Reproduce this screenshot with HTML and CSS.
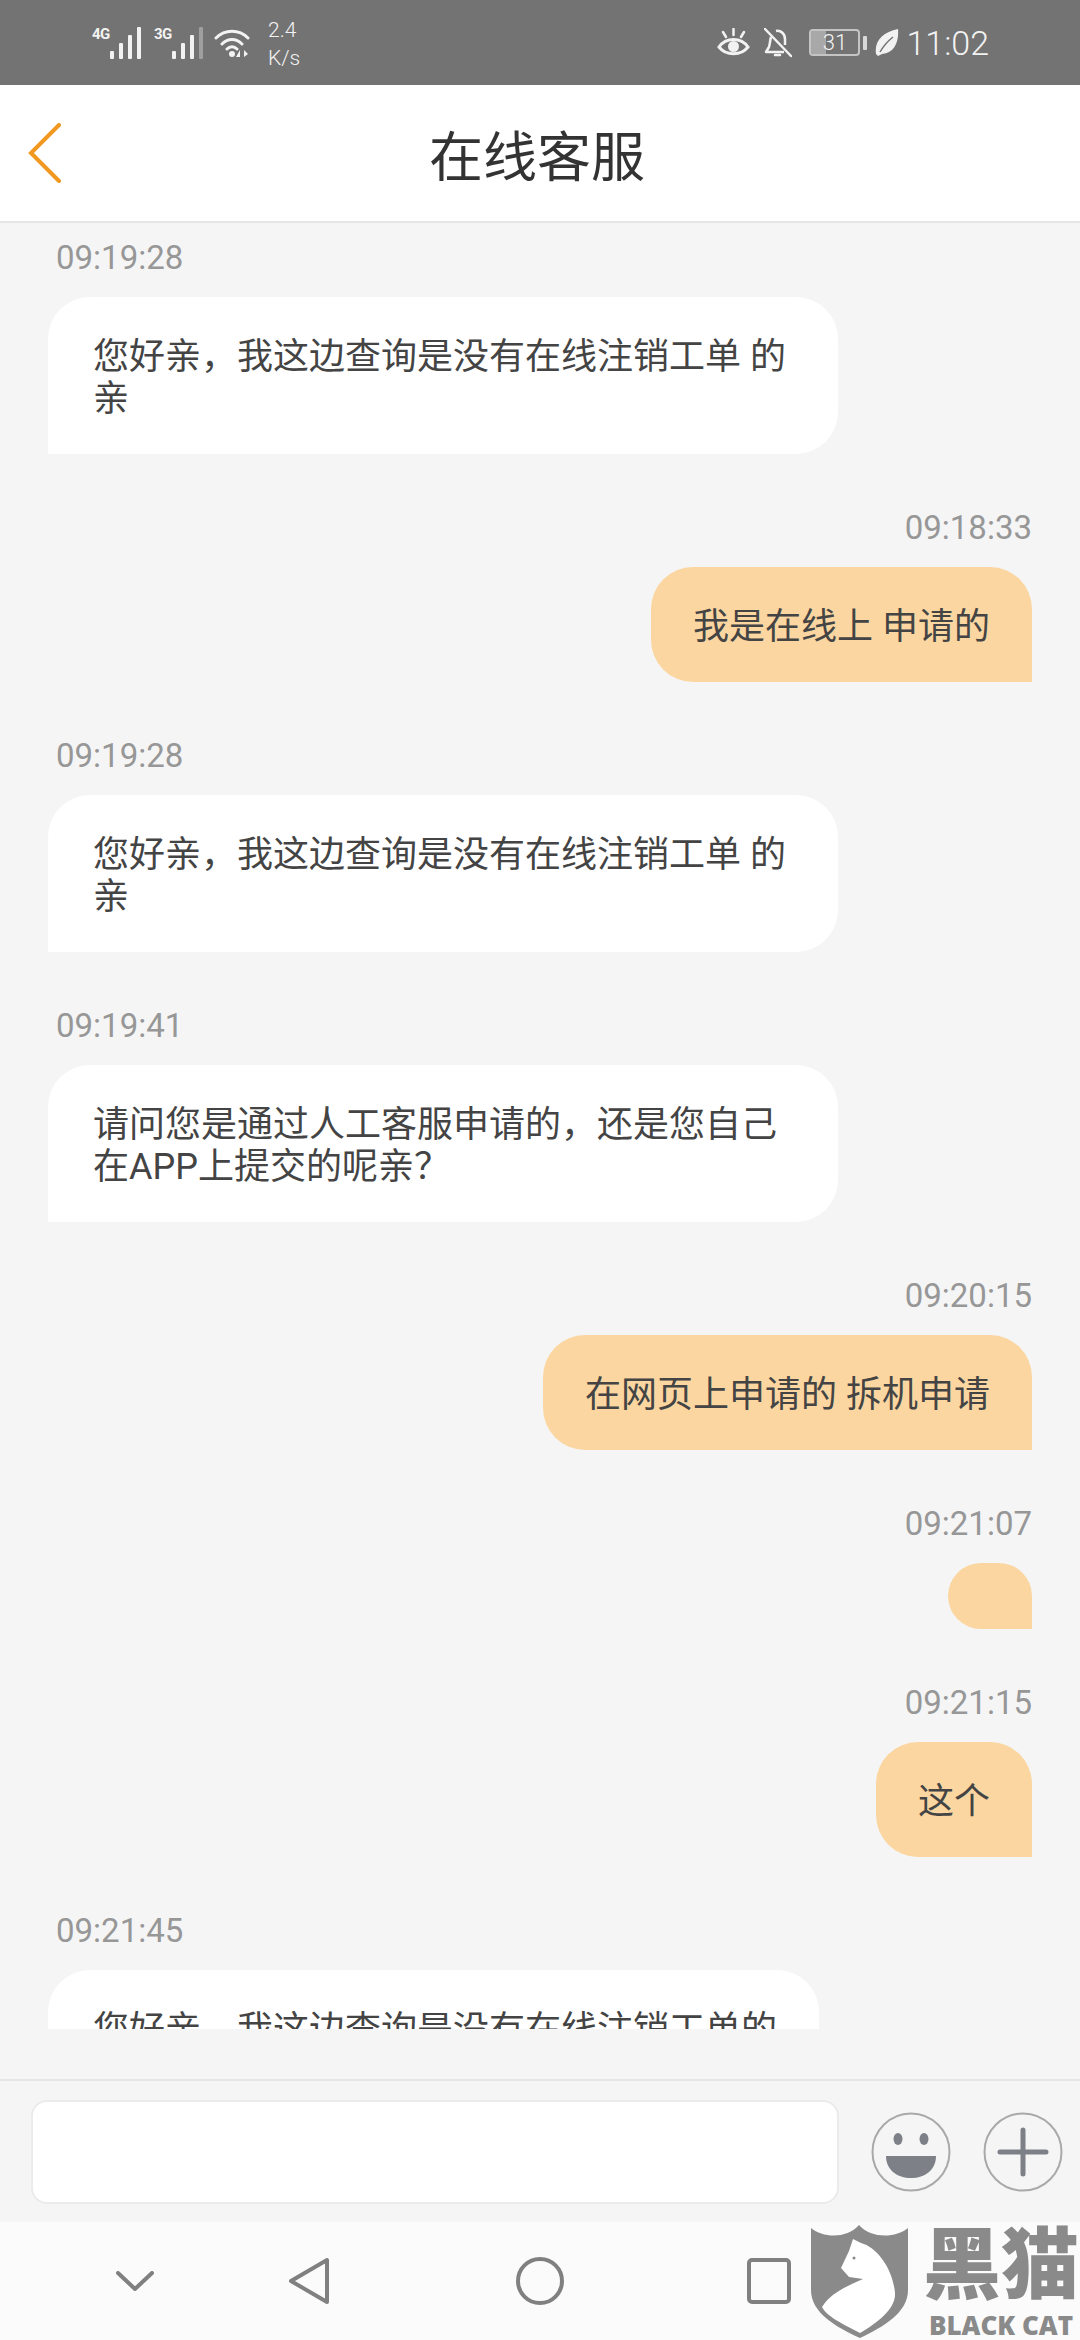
FILE: index.html
```html
<!DOCTYPE html>
<html lang="zh-CN">
<head>
    <meta charset="UTF-8">
    <meta name="viewport" content="width=device-width, initial-scale=1.0">
    <title>在线客服</title>
    <link rel="stylesheet" href="styles.css">
</head>
<body>
    <div class="status-bar">
        <div class="status-left">
            <span class="net-label">4G</span>
            <svg class="signal" viewBox="0 0 32 32"><rect x="0" y="24" width="4" height="8" rx="1"/><rect x="9" y="16" width="4" height="16" rx="1"/><rect x="18" y="8" width="4" height="24" rx="1"/><rect x="27" y="0" width="4" height="32" rx="1"/></svg>
            <span class="net-label net-label-second">3G</span>
            <svg class="signal" viewBox="0 0 32 32"><rect x="0" y="24" width="4" height="8" rx="1"/><rect x="9" y="16" width="4" height="16" rx="1"/><rect x="18" y="8" width="4" height="24" rx="1"/><rect x="27" y="0" width="4" height="32" rx="1" opacity="0.35"/></svg>
            <svg class="wifi" viewBox="0 0 36 30">
                <path d="M2 10 C11 1 25 1 34 10 M8 16 C14 10 22 10 28 16 M13 21 C16 18 20 18 23 21" fill="none" stroke="#f2f2f2" stroke-width="3" stroke-linecap="round"/>
                <circle cx="18" cy="26" r="3" fill="#f2f2f2"/>
                <path d="M26 29 V22 L22 29 Z M30 22 V29 L34 26 Z" fill="#f2f2f2"/>
            </svg>
            <div class="speed">2.4<br>K/s</div>
        </div>
        <div class="status-right">
            <svg class="eye" viewBox="0 0 33 30">
                <path d="M2 19 C9 9 24 9 31 19 C24 28 9 28 2 19 Z" fill="none" stroke="#f2f2f2" stroke-width="3"/>
                <circle cx="16.500" cy="18.500" r="5.500" fill="#f2f2f2"/>
                <path d="M16.500 1 V7 M6 4 L9 9 M27 4 L24 9" stroke="#f2f2f2" stroke-width="2.500" stroke-linecap="round"/>
            </svg>
            <svg class="bell" viewBox="0 0 28 30">
                <path d="M7 9 C6 12 6 16 5 19 L2 24 H20 M12 3 C17 2 21 6 21 11 V17" fill="none" stroke="#f2f2f2" stroke-width="2.500" stroke-linejoin="round"/>
                <path d="M1 1 L27 28" stroke="#f2f2f2" stroke-width="2.500" stroke-linecap="round"/>
                <path d="M11 27 H16" stroke="#f2f2f2" stroke-width="2.500" stroke-linecap="round"/>
            </svg>
            <div class="battery"><div class="battery-level"></div><span class="battery-num">31</span></div>
            <div class="battery-cap"></div>
            <svg class="leaf" viewBox="0 0 24 27">
                <path d="M23 0 C24 12 20 24 7 25 L3 27 L1 25 C-1 12 8 3 23 0 Z" fill="#f2f2f2"/>
                <path d="M5 23 C9 16 13 12 18 8" fill="none" stroke="#737373" stroke-width="1.500"/>
            </svg>
            <span class="clock">11:02</span>
        </div>
    </div>

    <header class="top-bar">
        <svg class="back" viewBox="0 0 34 60"><path d="M31 2 L3 30 L31 58" fill="none" stroke="#f0981f" stroke-width="4" stroke-linecap="round"/></svg>
        <h1 class="title">在线客服</h1>
        <div></div>
    </header>

    <main class="chat">
        <div class="msg">
            <div class="time">09:19:28</div>
            <div class="bubble">您好亲，我这边查询是没有在线注销工单 的亲</div>
        </div>
        <div class="msg mine">
            <div class="time">09:18:33</div>
            <div class="bubble">我是在线上 申请的</div>
        </div>
        <div class="msg">
            <div class="time">09:19:28</div>
            <div class="bubble">您好亲，我这边查询是没有在线注销工单 的亲</div>
        </div>
        <div class="msg">
            <div class="time">09:19:41</div>
            <div class="bubble">请问您是通过人工客服申请的，还是您自己在APP上提交的呢亲？</div>
        </div>
        <div class="msg mine">
            <div class="time">09:20:15</div>
            <div class="bubble">在网页上申请的 拆机申请</div>
        </div>
        <div class="msg mine">
            <div class="time">09:21:07</div>
            <div class="bubble bubble-empty"></div>
        </div>
        <div class="msg mine">
            <div class="time">09:21:15</div>
            <div class="bubble">这个</div>
        </div>
        <div class="msg">
            <div class="time">09:21:45</div>
            <div class="bubble">您好亲，我这边查询是没有在线注销工单的</div>
        </div>
    </main>

    <div class="composer">
        <div class="input-box"></div>
        <svg class="round-btn" viewBox="0 0 80 80">
            <circle cx="40" cy="40" r="38.500" fill="none" stroke="#a9a9a9" stroke-width="2"/>
            <ellipse cx="27" cy="27" rx="4.500" ry="6" fill="#7d8087"/>
            <ellipse cx="53" cy="27" rx="4.500" ry="6" fill="#7d8087"/>
            <path d="M15 44 H65 C65 58 54 66 40 66 C26 66 15 58 15 44 Z" fill="#7d8087"/>
        </svg>
        <svg class="round-btn" viewBox="0 0 80 80">
            <circle cx="40" cy="40" r="38.500" fill="none" stroke="#a9a9a9" stroke-width="2"/>
            <path d="M40 18 V62 M17 40 H63" stroke="#7d8087" stroke-width="5" stroke-linecap="round"/>
        </svg>
    </div>

    <nav class="nav-bar">
        <svg class="nav-chevron" viewBox="0 0 38 20"><path d="M2 2 L19 18 L36 2" fill="none" stroke="#808080" stroke-width="4" stroke-linecap="round" stroke-linejoin="round"/></svg>
        <svg class="nav-back" viewBox="0 0 42 48"><path d="M39 3 V45 L3 24 Z" fill="none" stroke="#808080" stroke-width="4" stroke-linejoin="round"/></svg>
        <svg class="nav-home" viewBox="0 0 48 48"><circle cx="24" cy="24" r="22" fill="none" stroke="#808080" stroke-width="4"/></svg>
        <svg class="nav-recent" viewBox="0 0 44 46"><rect x="2" y="2" width="40" height="42" rx="3" fill="none" stroke="#808080" stroke-width="4"/></svg>
    </nav>

    <div class="watermark">
        <svg class="wm-shield" viewBox="0 0 97 113">
            <path d="M0 3 C12 13 36 14 48 0 C60 14 85 13 97 3 V65 C97 88 72 102 49 113 C25 102 0 88 0 65 Z" fill="#8a8a8a"/>
            <path d="M42 14 L50 18 C66 22 82 44 84 68 C85 84 66 98 49 108 C34 100 16 92 11 82 C20 68 34 62 52 54 L38 52 L30 43 L38 26 Z" fill="#fff"/>
            <circle cx="43" cy="33" r="1.500" fill="#8a8a8a"/>
        </svg>
        <div class="wm-text">
            <div class="wm-cn">黑猫</div>
            <div class="wm-en">BLACK CAT</div>
        </div>
    </div>
</body>
</html>
```

FILE: styles.css
```css
:root {
    --bg-color: #f5f5f5;
    --bar-grey: #737373;
    --line: #e6e6e6;
    --time: #979797;
    --text: #444;
    --mine: #fbd6a0;
}

* {
    box-sizing: border-box;
}

html, body {
    margin: 0;
    height: 2340px;
    overflow: hidden;
}

body {
    position: relative;
    display: flex;
    flex-direction: column;
    font-family: Roboto, "Noto Sans CJK SC", sans-serif;
    background-color: var(--bg-color);
    color: var(--text);
}

/* status bar */
.status-bar {
    flex: none;
    height: 85px;
    padding: 0 91px 0 92px;
    display: flex;
    align-items: center;
    justify-content: space-between;
    background-color: var(--bar-grey);
    color: #f2f2f2;
}

.status-left, .status-right {
    display: flex;
    align-items: center;
}

.net-label {
    width: 18px;
    margin-top: -18px;
    font-size: 15px;
    font-weight: 700;
    letter-spacing: -0.5px;
    line-height: 16px;
    white-space: nowrap;
}

.net-label-second {
    margin-left: 12px;
}

.signal {
    width: 32px;
    height: 32px;
    margin-top: 1px;
    fill: #f2f2f2;
}

.wifi {
    width: 36px;
    height: 30px;
    margin-left: 10px;
}

.speed {
    margin-top: 2px;
    margin-left: 18px;
    font-size: 21px;
    line-height: 28px;
    font-weight: 300;
}

.eye {
    width: 35px;
    height: 30px;
}

.bell {
    width: 28px;
    height: 30px;
    margin-left: 13px;
}

.battery {
    position: relative;
    width: 51px;
    height: 27px;
    margin-left: 17px;
    border: 2px solid #c4c4c4;
    border-radius: 4px;
}

.battery-level {
    width: 31%;
    height: 100%;
    background-color: #a8a8a8;
}

.battery-num {
    position: absolute;
    inset: 0;
    text-align: center;
    font-size: 22px;
    line-height: 23px;
    font-weight: 300;
}

.battery-cap {
    width: 4px;
    height: 14px;
    margin-left: 3px;
    background-color: #d8d8d8;
    border-radius: 1px;
}

.leaf {
    width: 24px;
    height: 27px;
    margin-left: 8px;
}

.clock {
    margin-left: 7px;
    font-size: 34px;
    font-weight: 300;
}

/* header */
.top-bar {
    flex: none;
    height: 138px;
    display: grid;
    grid-template-columns: 1fr auto 1fr;
    align-items: center;
    background-color: #fff;
    border-bottom: 2px solid var(--line);
}

.back {
    width: 34px;
    height: 60px;
    margin-left: 28px;
}

.title {
    margin: 12px 0 0 -6px;
    font-size: 54px;
    font-weight: 400;
    line-height: 70px;
    color: #333;
}

/* messages */
.chat {
    flex: none;
    height: 1806px;
    padding: 16px 48px 0;
    overflow: hidden;
}

.msg {
    display: flex;
    flex-direction: column;
    align-items: flex-start;
    margin-bottom: 55px;
}

.time {
    margin-bottom: 20px;
    padding: 0 8px;
    font-size: 33px;
    line-height: 38px;
    color: var(--time);
}

.bubble {
    max-width: 790px;
    padding: 39px 42px 34px 45px;
    font-size: 36px;
    line-height: 42px;
    background-color: #fff;
    border-radius: 42px 42px 42px 0;
}

.mine {
    align-items: flex-end;
}

.mine .time {
    padding: 0;
}

.mine .bubble {
    padding-left: 42px;
    background-color: var(--mine);
    border-radius: 42px 42px 0 42px;
}

.mine .bubble-empty {
    width: 84px;
    height: 66px;
    padding: 0;
}

/* input row */
.composer {
    flex: none;
    height: 143px;
    display: flex;
    align-items: center;
    gap: 32px;
    margin-top: 50px;
    padding-left: 31px;
    border-top: 2px solid var(--line);
}

.input-box {
    flex: none;
    width: 808px;
    height: 104px;
    background-color: #fff;
    border: 2px solid #ebebeb;
    border-radius: 16px;
}

.round-btn {
    flex: none;
    width: 80px;
    height: 80px;
}

/* navigation */
.nav-bar {
    flex: none;
    height: 118px;
    background-color: #fbfbfb;
    display: grid;
    grid-template-columns: 116px 38px 134px 42px 186px 48px 183px 44px;
    align-items: center;
}

.nav-chevron {
    grid-column: 2;
    width: 38px;
    height: 20px;
}

.nav-back {
    grid-column: 4;
    width: 42px;
    height: 48px;
}

.nav-home {
    grid-column: 6;
    width: 48px;
    height: 48px;
}

.nav-recent {
    grid-column: 8;
    width: 44px;
    height: 46px;
}

/* logo laid over the nav bar */
.watermark {
    position: absolute;
    left: 811px;
    bottom: 2px;
    display: flex;
    gap: 15px;
}

.wm-shield {
    width: 97px;
    height: 113px;
}

.wm-text {
    width: 156px;
    color: #8a8a8a;
    text-align: center;
}

.wm-cn {
    margin-top: 0;
    font-size: 78px;
    font-weight: 900;
    line-height: 84px;
    white-space: nowrap;
}

.wm-en {
    margin-top: 4px;
    font-family: "Open Sans", sans-serif;
    font-size: 26px;
    font-weight: 800;
    line-height: 24px;
    white-space: nowrap;
}
```
